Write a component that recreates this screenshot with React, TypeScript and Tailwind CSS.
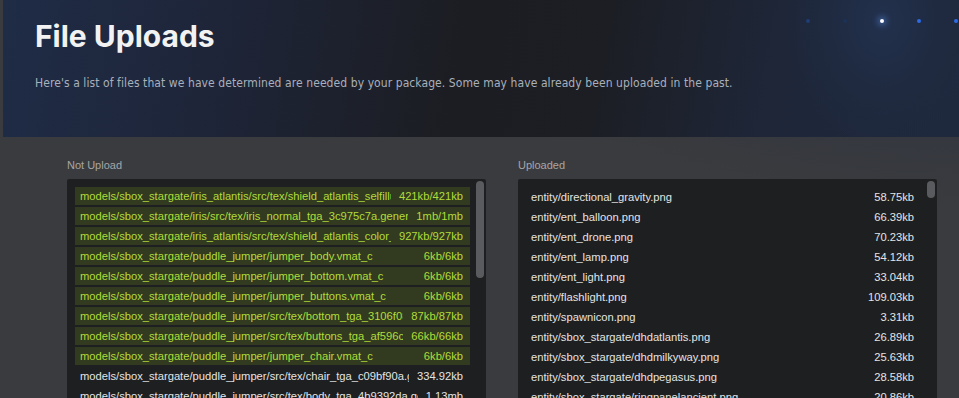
import React from "react";

const notUploaded: { name: string; size: string; done: boolean }[] = [
  { name: "models/sbox_stargate/iris_atlantis/src/tex/shield_atlantis_selfillum_tga_8d2a61f3.generated.vtex_c", size: "421kb/421kb", done: true },
  { name: "models/sbox_stargate/iris/src/tex/iris_normal_tga_3c975c7a.generated.vtex_c", size: "1mb/1mb", done: true },
  { name: "models/sbox_stargate/iris_atlantis/src/tex/shield_atlantis_color_tga_5e1c0b7d.generated.vtex_c", size: "927kb/927kb", done: true },
  { name: "models/sbox_stargate/puddle_jumper/jumper_body.vmat_c", size: "6kb/6kb", done: true },
  { name: "models/sbox_stargate/puddle_jumper/jumper_bottom.vmat_c", size: "6kb/6kb", done: true },
  { name: "models/sbox_stargate/puddle_jumper/jumper_buttons.vmat_c", size: "6kb/6kb", done: true },
  { name: "models/sbox_stargate/puddle_jumper/src/tex/bottom_tga_3106f08e.generated.vtex_c", size: "87kb/87kb", done: true },
  { name: "models/sbox_stargate/puddle_jumper/src/tex/buttons_tga_af596cc2.generated.vtex_c", size: "66kb/66kb", done: true },
  { name: "models/sbox_stargate/puddle_jumper/jumper_chair.vmat_c", size: "6kb/6kb", done: true },
  { name: "models/sbox_stargate/puddle_jumper/src/tex/chair_tga_c09bf90a.generated.vtex_c", size: "334.92kb", done: false },
  { name: "models/sbox_stargate/puddle_jumper/src/tex/body_tga_4b9392da.generated.vtex_c", size: "1.13mb", done: false },
];

const uploaded: [string, string][] = [
  ["entity/directional_gravity.png", "58.75kb"],
  ["entity/ent_balloon.png", "66.39kb"],
  ["entity/ent_drone.png", "70.23kb"],
  ["entity/ent_lamp.png", "54.12kb"],
  ["entity/ent_light.png", "33.04kb"],
  ["entity/flashlight.png", "109.03kb"],
  ["entity/spawnicon.png", "3.31kb"],
  ["entity/sbox_stargate/dhdatlantis.png", "26.89kb"],
  ["entity/sbox_stargate/dhdmilkyway.png", "25.63kb"],
  ["entity/sbox_stargate/dhdpegasus.png", "28.58kb"],
  ["entity/sbox_stargate/ringpanelancient.png", "20.86kb"],
];

export default function App() {
  return (
    <div className="h-[398px] w-[959px] overflow-hidden bg-[#3a3b3e] bg-[radial-gradient(ellipse_600px_260px_at_100%_0%,#2a3345_0%,#33373f_45%,#3a3b3e_80%)] font-['Liberation_Sans',Arial,sans-serif]">
      <header className="relative ml-[3px] h-[137px] overflow-hidden bg-[linear-gradient(100deg,#1f2c46_0%,#1e2539_22%,#1c1d22_48%,#1c1e24_62%,#1e2638_80%,#1f293e_100%)] pl-[32px] pt-[14px]">
        <div className="pointer-events-none absolute left-[780px] top-[-110px] h-[260px] w-[200px] rounded-full bg-[radial-gradient(closest-side,#22314d_0%,#1f2a40_55%,transparent_100%)]" />
        <div className="absolute left-[803px] top-[19px] flex items-center gap-[33px]">
          <span className="h-[4px] w-[4px] rounded-full bg-[#1f3d74]" />
          <span className="h-[4px] w-[4px] rounded-full bg-[#1c3158]" />
          <span className="h-[4px] w-[4px] rounded-full bg-white shadow-[0_0_6px_2px_rgba(90,140,230,0.6)]" />
          <span className="h-[4px] w-[4px] rounded-full bg-[#2d6ae6]" />
          <span className="h-[4px] w-[4px] rounded-full bg-[#2d6ae6]" />
        </div>
        <h1 className="relative font-['Inter',sans-serif] text-[30px] font-bold leading-[44px] tracking-[0px] text-[#f2f2f2]">
          File Uploads
        </h1>
        <p className="relative mt-[17px] font-['DejaVu_Sans_Condensed','DejaVu_Sans',sans-serif] text-[12px] leading-[16px] tracking-[0.08px] text-[#a9b0bc]">
          Here's a list of files that we have determined are needed by your package. Some may have already been uploaded in the past.
        </p>
      </header>

      <div className="flex gap-[32px] pl-[67px] pt-[21px]">
        <section className="w-[419px]">
          <div className="mb-[7px] text-[11px] leading-[14px] text-[#a6a6a6]">Not Upload</div>
          <div className="relative h-[260px] overflow-hidden rounded-[2px] bg-[#1e1f21] pl-[8px] pr-[16px] pt-[8px]">
            <div className="flex flex-col gap-[2px]">
              {notUploaded.map((f, i) => (
                <div
                  key={i}
                  className={
                    f.done
                      ? "flex h-[18px] items-center gap-[8px] bg-[#323b1f] pl-[5px] pr-[7px] text-[11.2px] text-[#b3dc3a]"
                      : "flex h-[18px] items-center gap-[8px] pl-[5px] pr-[7px] text-[11.2px] text-[#e4e4e4]"
                  }
                >
                  <span className="min-w-0 flex-1 overflow-hidden whitespace-nowrap">{f.name}</span>
                  <span className="shrink-0 whitespace-nowrap">{f.size}</span>
                </div>
              ))}
            </div>
            <div className="absolute right-[2px] top-[2px] h-[97px] w-[8px] rounded-[4px] bg-[#5a5b5e]" />
          </div>
        </section>

        <section className="w-[419px]">
          <div className="mb-[7px] text-[11px] leading-[14px] text-[#a6a6a6]">Uploaded</div>
          <div className="relative h-[260px] overflow-hidden rounded-[2px] bg-[#1e1f21] pl-[13px] pr-[23px] pt-[8px]">
            {uploaded.map(([n, s], i) => (
              <div key={i} className="flex h-[20px] items-center justify-between text-[11.2px] text-[#e4e4e4]">
                <span className="whitespace-nowrap">{n}</span>
                <span className="whitespace-nowrap">{s}</span>
              </div>
            ))}
            <div className="absolute right-[2px] top-[2px] h-[17px] w-[8px] rounded-[4px] bg-[#5a5b5e]" />
          </div>
        </section>
      </div>
    </div>
  );
}
